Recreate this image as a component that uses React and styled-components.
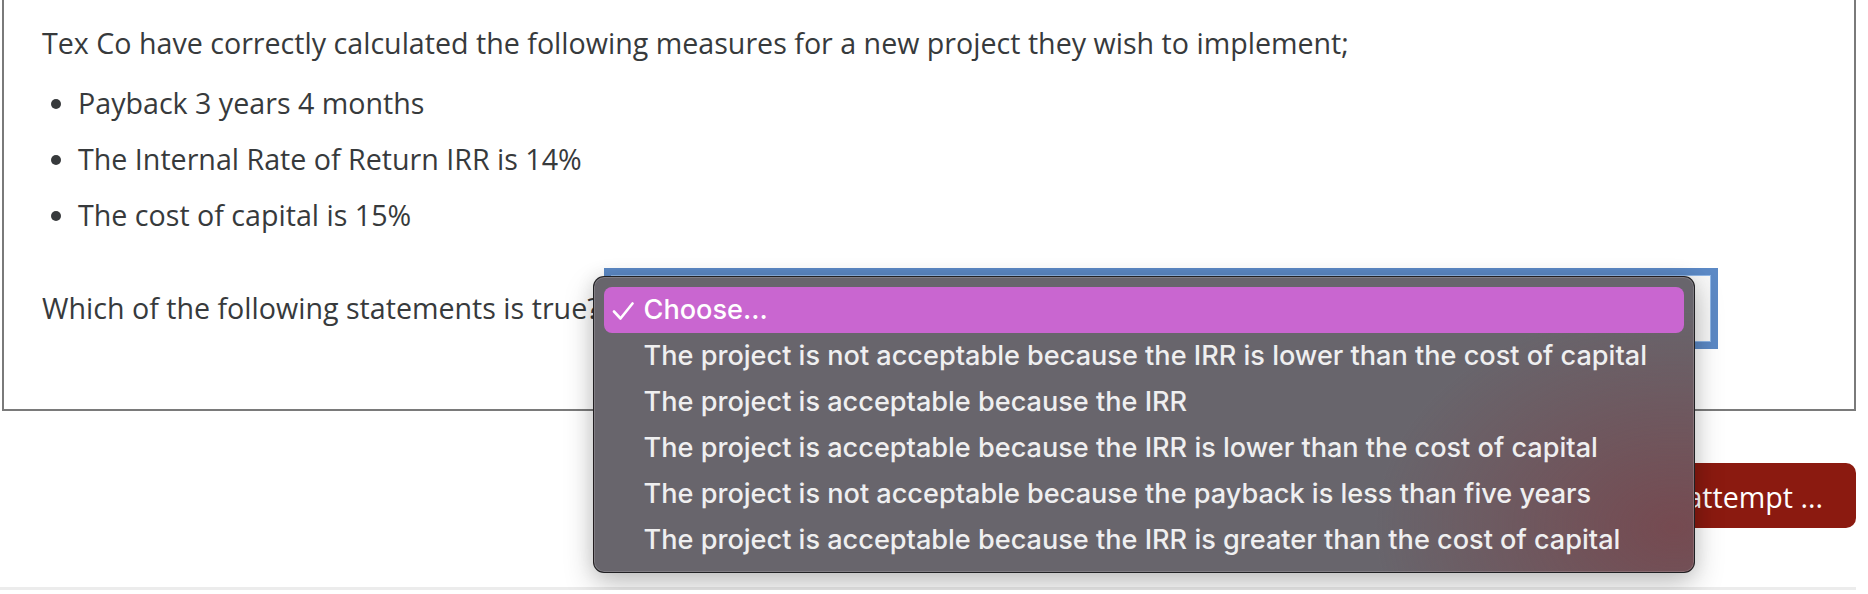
import React from "react";
import styled, { createGlobalStyle } from "styled-components";

const GlobalStyle = createGlobalStyle`
  html, body {
    margin: 0;
    background: #ffffff;
    overflow: hidden;
  }
  body {
    font-family: "Open Sans", "Noto Sans", sans-serif;
    color: #373a3c;
  }
`;

const Page = styled.div`
  padding: 0 12px 0 0;
  font-size: 28.64px;
  line-height: 1.5;
`;

const QuestionBox = styled.div`
  margin: -2px 0 0 2px;
  border: 2px solid #7a7a7a;
  padding: 21.7px 40px 67px 38px;
  background: #ffffff;
`;

const Paragraph = styled.p`
  margin: 0 0 17.5px;
`;

const Bullets = styled.ul`
  margin: 0;
  padding-left: 36px;
  list-style: disc;

  li + li {
    margin-top: 13px;
  }
`;

const PromptRow = styled.div`
  display: flex;
  align-items: center;
  gap: 11px;
  margin-top: 37.5px;
`;

const SelectWrap = styled.div`
  position: relative;
  width: 1100px;
  height: 67px;
`;

const SelectField = styled.div`
  box-sizing: border-box;
  height: 100%;
  border: 1px solid #8fb6e6;
  background: #f7f7f7;
  box-shadow: 0 0 0 7px #5c89c5;
  padding: 0 16px;
  display: flex;
  align-items: center;
  color: #495057;
`;

const Menu = styled.div`
  position: absolute;
  z-index: 2;
  left: -18px;
  top: 1px;
  width: 1102px;
  box-sizing: border-box;
  padding: 10px 10px 8px 10px;
  border: 1px solid rgba(20, 20, 22, 0.85);
  border-radius: 11px;
  background:
    radial-gradient(ellipse 300px 220px at 1080px 250px, rgba(128, 52, 58, 0.55), rgba(128, 52, 58, 0) 100%),
    #68656c;
  box-shadow:
    inset 0 0 0 1px rgba(255, 255, 255, 0.16),
    0 12px 30px rgba(0, 0, 0, 0.22),
    0 0 18px rgba(0, 0, 0, 0.1);
  font-family: "Inter", "Roboto", sans-serif;
  font-size: 27.1px;
  font-weight: 500;
  color: #efeff0;
`;

const Option = styled.div`
  position: relative;
  height: 46.2px;
  line-height: 46.2px;
  padding-left: 40px;
  border-radius: 8px;
  white-space: nowrap;
  background: ${(p) => (p.$active ? "#c966d0" : "transparent")};
  color: ${(p) => (p.$active ? "#ffffff" : "#efeff0")};
`;

const Check = styled.svg`
  position: absolute;
  left: 8px;
  top: 15px;
  width: 22px;
  height: 18px;
`;

const Actions = styled.div`
  display: flex;
  justify-content: flex-end;
  margin-top: 52px;
`;

const FinishButton = styled.button`
  height: 65px;
  box-sizing: border-box;
  padding: 2px 33px 0 33px;
  border: none;
  border-radius: 10px;
  background: #8b1a10;
  color: #ffffff;
  font-family: "Open Sans", "Noto Sans", sans-serif;
  font-size: 28.64px;
  display: flex;
  align-items: center;
`;

const FooterLine = styled.div`
  margin-top: 59px;
  height: 3px;
  background: #ececec;
`;

const options = [
  "Choose...",
  "The project is not acceptable because the IRR is lower than the cost of capital",
  "The project is acceptable because the IRR",
  "The project is acceptable because the IRR is lower than the cost of capital",
  "The project is not acceptable because the payback is less than five years",
  "The project is acceptable because the IRR is greater than the cost of capital",
];

export default function App() {
  return (
    <>
      <GlobalStyle />
      <Page>
        <QuestionBox>
          <Paragraph>
            Tex Co have correctly calculated the following measures for a new project they wish to implement;
          </Paragraph>
          <Bullets>
            <li>Payback 3 years 4 months</li>
            <li>The Internal Rate of Return IRR is 14%</li>
            <li>The cost of capital is 15%</li>
          </Bullets>
          <PromptRow>
            <span>Which of the following statements is true?</span>
            <SelectWrap>
              <SelectField>Choose...</SelectField>
              <Menu>
                {options.map((o, i) => (
                  <Option key={o} $active={i === 0}>
                    {i === 0 && (
                      <Check viewBox="0 0 22 18">
                        <polyline
                          points="2,9.5 8.5,16.5 20.5,1.5"
                          fill="none"
                          stroke="#ffffff"
                          strokeWidth="2.6"
                          strokeLinecap="round"
                          strokeLinejoin="round"
                        />
                      </Check>
                    )}
                    {o}
                  </Option>
                ))}
              </Menu>
            </SelectWrap>
          </PromptRow>
        </QuestionBox>
        <Actions>
          <FinishButton>Finish attempt ...</FinishButton>
        </Actions>
        <FooterLine />
      </Page>
    </>
  );
}
